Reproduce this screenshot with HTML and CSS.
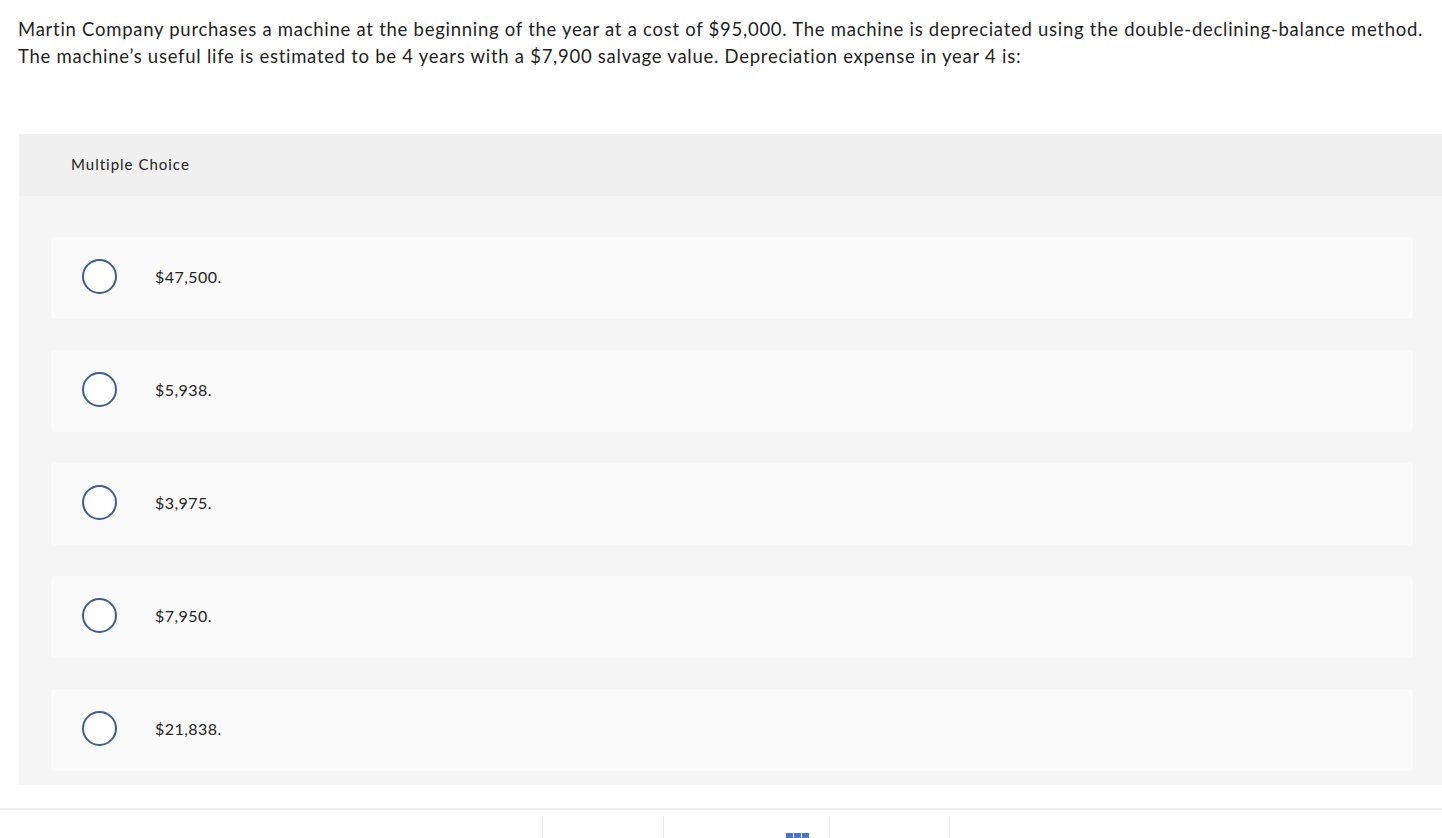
FILE: index.html
```html
<!DOCTYPE html>
<html>
<head>
<meta charset="utf-8">
<link rel="stylesheet" href="styles.css">
</head>
<body>
<div class="page">
  <p class="question">Martin Company purchases a machine at the beginning of the year at a cost of $95,000. The machine is depreciated using the double-declining-balance method. The machine’s useful life is estimated to be 4 years with a $7,900 salvage value. Depreciation expense in year 4 is:</p>
  <section class="panel">
    <div class="panel-head">Multiple Choice</div>
    <div class="panel-body">
      <label class="option"><span class="radio"></span><span class="opt-text">$47,500.</span></label>
      <label class="option"><span class="radio"></span><span class="opt-text">$5,938.</span></label>
      <label class="option"><span class="radio"></span><span class="opt-text">$3,975.</span></label>
      <label class="option"><span class="radio"></span><span class="opt-text">$7,950.</span></label>
      <label class="option"><span class="radio"></span><span class="opt-text">$21,838.</span></label>
    </div>
  </section>
</div>
<footer class="footer">
  <div class="fcell c1"></div>
  <div class="fcell c2"></div>
  <div class="fcell c3"><span class="dots"><i></i><i></i><i></i></span></div>
  <div class="fcell c4"></div>
  <div class="fcell c5"></div>
</footer>
</body>
</html>
```

FILE: styles.css
```css
* { box-sizing: border-box; }
html, body { margin: 0; padding: 0; background: #fff; }
body {
  font-family: "Lato", "Liberation Sans", sans-serif;
  color: #222;
  width: 1442px;
  height: 838px;
  overflow: hidden;
}
.page { padding: 16px 0 0 18px; }
.question {
  margin: 0;
  font-size: 18.5px;
  line-height: 27px;
  letter-spacing: 0.73px;
  width: 1420px;
  color: #1f1f1f;
}
.panel {
  margin: 64px 0 0 1px;
  background: #f5f5f5;
}
.panel-head {
  height: 62px;
  background: #f0f0f0;
  padding-left: 52px;
  display: flex;
  align-items: center;
  font-size: 15px;
  letter-spacing: 1px;
  color: #222;
  padding-bottom: 2px;
}
.panel-body {
  padding: 41px 29px 14px 32px;
  display: flex;
  flex-direction: column;
  gap: 31px;
}
.option {
  height: 82px;
  background: #fafafa;
  border-radius: 4px;
  display: flex;
  align-items: center;
  padding-left: 31px;
  padding-bottom: 3px;
}
.radio {
  width: 35px;
  height: 35px;
  border-radius: 50%;
  border: 2px solid #3d5f8e;
  background: #fff;
  flex: none;
}
.opt-text {
  margin-left: 38px;
  font-size: 16px;
  letter-spacing: 0.45px;
  color: #222;
}
.footer {
  margin-top: 23px;
  border-top: 2px solid #eeeeee;
  display: flex;
  padding-top: 6px;
  height: 40px;
}
.fcell { height: 100%; }
.c1 { width: 543px; border-right: 1px solid #eeeeee; }
.c2 { width: 121px; border-right: 1px solid #eeeeee; }
.c3 { width: 166px; border-right: 1px solid #eeeeee; padding: 17px 0 0 122px; }
.c4 { width: 120px; border-right: 1px solid #eeeeee; }
.dots { display: flex; gap: 1px; }
.dots i { display: block; width: 7px; height: 7px; background: #4a78c0; }
```
